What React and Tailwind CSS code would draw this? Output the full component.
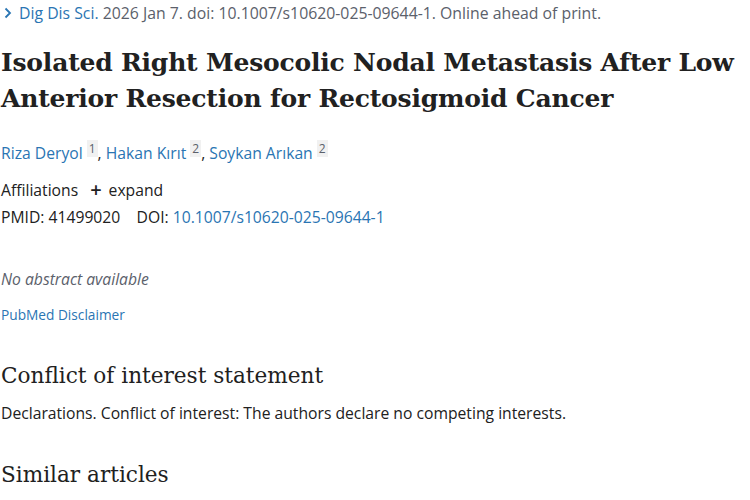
import React from "react";

export default function App() {
  return (
    <div className="w-[750px] h-[500px] overflow-hidden bg-white text-[#212121] font-['Open_Sans',sans-serif]">
      <div className="pl-[1px] pt-[3px]">
        <div className="flex items-center text-[15.8px] leading-[20px] text-[#5b616b]">
          <svg width="12" height="12" viewBox="0 0 12 12" className="mr-[5px] ml-[1px]">
            <path d="M3.5 1.5 L8 6 L3.5 10.5" fill="none" stroke="#2a75b3" strokeWidth="1.8" />
          </svg>
          <span className="text-[#2a75b3]">Dig Dis Sci.</span>
          <span>&nbsp;2026 Jan 7. doi: 10.1007/s10620-025-09644-1. Online ahead of print.</span>
        </div>
        <h1 className="mt-[22px] font-['DejaVu_Serif',serif] font-bold text-[25px] leading-[36px] text-[#212121] tracking-[-0.2px]">
          Isolated Right Mesocolic Nodal Metastasis After Low Anterior Resection for Rectosigmoid Cancer
        </h1>
        <div className="mt-[25px] text-[15.7px] leading-[22px] text-[#2a75b3]">
          Riza Deryol <sup className="text-[12px] text-[#5b616b] bg-[#f1f1f1] px-[2px]">1</sup>
          <span className="text-[#212121]">, </span>
          Hakan Kırıt <sup className="text-[12px] text-[#5b616b] bg-[#f1f1f1] px-[2px]">2</sup>
          <span className="text-[#212121]">, </span>
          Soykan Arıkan <sup className="text-[12px] text-[#5b616b] bg-[#f1f1f1] px-[2px]">2</sup>
        </div>
        <div className="mt-[15px] flex items-center text-[15.7px] leading-[22px]">
          <span>Affiliations</span>
          <span className="ml-[12px] text-[20px] leading-[20px] font-semibold">+</span>
          <span className="ml-[7px]">expand</span>
        </div>
        <div className="mt-[5px] text-[15.7px] leading-[22px]">
          PMID: 41499020&nbsp;&nbsp;&nbsp; DOI: <span className="text-[#2a75b3]">10.1007/s10620-025-09644-1</span>
        </div>
        <div className="mt-[40px] text-[15.7px] leading-[22px] italic text-[#5b616b]">No abstract available</div>
        <div className="mt-[15px] text-[13.7px] leading-[20px] text-[#2a75b3]">PubMed Disclaimer</div>
        <h2 className="mt-[36px] font-['DejaVu_Serif',serif] text-[21.6px] leading-[30px] text-[#212121]">Conflict of interest statement</h2>
        <div className="mt-[11px] text-[15.7px] leading-[22px]">
          Declarations. Conflict of interest: The authors declare no competing interests.
        </div>
        <h2 className="mt-[36px] font-['DejaVu_Serif',serif] text-[21.6px] leading-[30px] text-[#212121]">Similar articles</h2>
      </div>
    </div>
  );
}
